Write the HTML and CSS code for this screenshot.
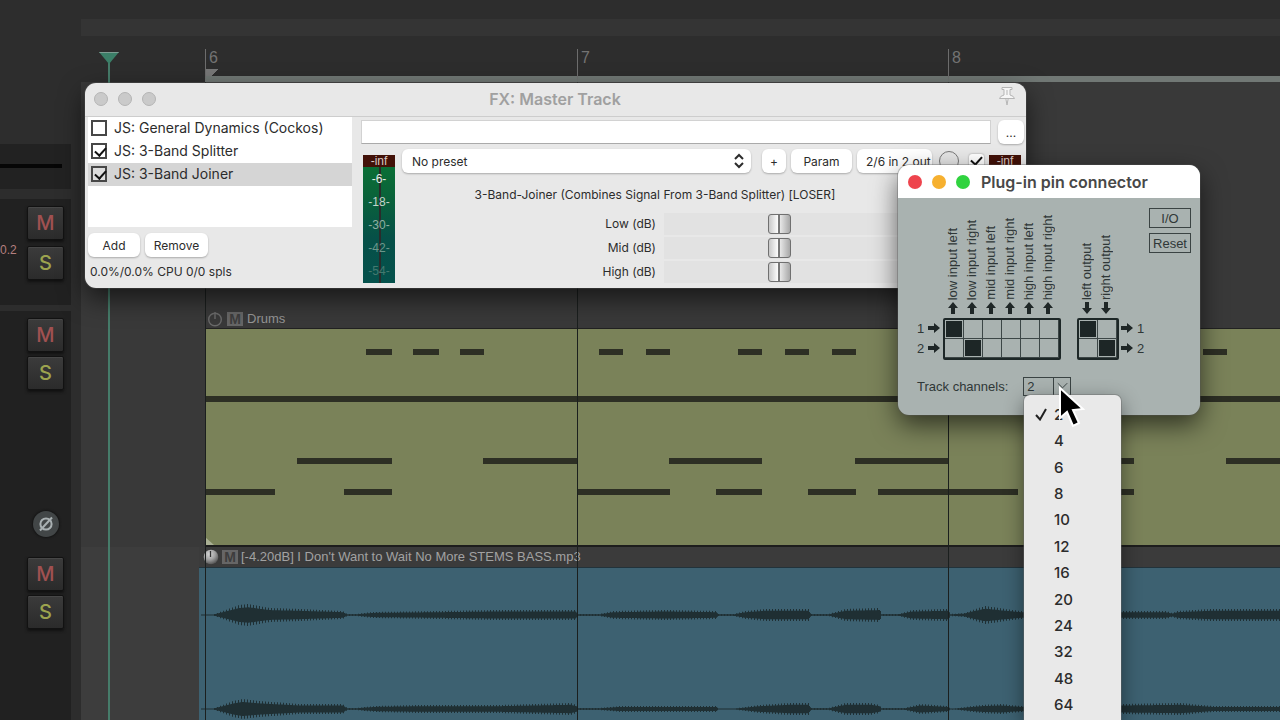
FILE: index.html
```html
<!DOCTYPE html>
<html lang="en">
<head>
<meta charset="utf-8">
<title>FX: Master Track</title>
<link rel="stylesheet" href="styles.css">
</head>
<body>
<div class="app">
  <aside class="tracks">
    <section class="master"><div class="master-line"></div></section>
    <section class="track track-first">
      <span class="volume">0.2</span>
      <div class="track-buttons spaced">
        <button class="tb mute">M</button>
        <button class="tb solo">S</button>
      </div>
    </section>
    <section class="track track-drums">
      <div class="track-buttons">
        <button class="tb mute">M</button>
        <button class="tb solo">S</button>
      </div>
      <button class="phase" aria-label="Phase">
        <svg viewBox="0 0 26 26" width="26" height="26"><circle cx="13" cy="13" r="5.6"/><path d="M7 19.5 19 6.5"/></svg>
      </button>
    </section>
    <section class="track track-bass">
      <div class="track-buttons">
        <button class="tb mute">M</button>
        <button class="tb solo">S</button>
      </div>
    </section>
  </aside>

  <main class="arrange">
    <div class="toolbar-gap"></div>
    <div class="regions"></div>
    <div class="ruler">
      <div class="measure first"><span>6</span></div>
      <div class="measure second"><span>7</span></div>
      <div class="measure rest"><span>8</span></div>
    </div>
    <div class="lane lane-drums">
      <header class="item-head">
        <svg class="power" viewBox="0 0 16 16" width="16" height="16"><circle cx="8" cy="8.500" r="6.300"/><path d="M8 1v7"/></svg>
        <span class="m-badge">M</span>
        <span>Drums</span>
      </header>
      <svg class="midi" height="216">
        <g id="notes"></g>
        <path class="corner" d="M0 208 9 216H0z"/>
      </svg>
    </div>
    <div class="lane lane-bass">
      <header class="item-head">
        <svg class="knob" viewBox="0 0 16 16" width="16" height="16">
          <defs><radialGradient id="kg" cx=".4" cy=".3" r=".75"><stop offset="0" stop-color="#d8d8d8"/><stop offset=".5" stop-color="#a2a2a2"/><stop offset="1" stop-color="#4c4c4c"/></radialGradient></defs>
          <circle cx="8" cy="8" r="7.300" fill="url(#kg)"/><path d="M7.500 2v6" stroke="#333" stroke-width="1.300"/>
        </svg>
        <span class="m-badge">M</span>
        <span>[-4.20dB] I Don't Want to Wait No More STEMS BASS.mp3</span>
      </header>
      <svg class="audio"><path id="wave-left"/><path id="wave-right"/></svg>
    </div>
    <div class="gridlines"><i class="first"></i><i class="second"></i><i class="rest"></i></div>
    <div class="playhead"></div>
  </main>
</div>

<section class="window fx">
  <header class="titlebar">
    <span class="lights off"><i></i><i></i><i></i></span>
    <h1>FX: Master Track</h1>
    <svg class="pin" viewBox="0 0 18 20" width="18" height="20"><path d="M4 1.500h10v2h-2v5.500q4 1 4.500 3.500h-15q.5-2.500 4.500-3.500v-5.500h-2zM7.800 12.500h2.400L9 19zM9 4v5"/></svg>
  </header>
  <div class="fx-body">
    <div class="fx-left">
      <div class="fx-list">
        <label class="fx-row"><input type="checkbox" class="box"><span>JS: General Dynamics (Cockos)</span></label>
        <label class="fx-row"><input type="checkbox" class="box" checked><span>JS: 3-Band Splitter</span></label>
        <label class="fx-row selected"><input type="checkbox" class="box" checked><span>JS: 3-Band Joiner</span></label>
      </div>
      <div class="fx-actions">
        <button class="btn">Add</button>
        <button class="btn">Remove</button>
      </div>
      <p class="cpu">0.0%/0.0% CPU 0/0 spls</p>
    </div>
    <div class="fx-right">
      <div class="comment-row">
        <input type="text" class="comment" aria-label="Comment">
        <button class="btn more">...</button>
      </div>
      <div class="fx-main">
        <div class="meter"><b>-inf</b><span>-6-</span><span>-18-</span><span>-30-</span><span>-42-</span><span>-54-</span></div>
        <div class="plugin">
          <div class="preset-row">
            <div class="preset">
              <select aria-label="Preset"><option>No preset</option></select>
              <svg viewBox="0 0 12 16" width="12" height="16"><path d="M2 6l4-4 4 4M2 10l4 4 4-4"/></svg>
            </div>
            <button class="btn plus">+</button>
            <button class="btn param">Param</button>
            <button class="btn io">2/6 in 2 out</button>
            <button class="wet" aria-label="Wet mix"></button>
            <input type="checkbox" class="enable" aria-label="Enabled" checked>
          </div>
          <p class="desc">3-Band-Joiner (Combines Signal From 3-Band Splitter) [LOSER]</p>
          <div class="sliders">
            <label for="low">Low (dB)</label><input id="low" type="range" min="0" max="100" value="35">
            <label for="mid">Mid (dB)</label><input id="mid" type="range" min="0" max="100" value="35">
            <label for="high">High (dB)</label><input id="high" type="range" min="0" max="100" value="35">
          </div>
        </div>
        <div class="meter"><b>-inf</b></div>
      </div>
    </div>
  </div>
</section>

<section class="window pins">
  <header class="titlebar">
    <span class="lights"><i class="red"></i><i class="amber"></i><i class="green"></i></span>
    <h2>Plug-in pin connector</h2>
  </header>
  <div class="pins-body">
    <div class="routing">
      <svg class="defs"><defs>
        <symbol id="up" viewBox="0 0 12 12"><path d="M6 0 11 6H8v6H4V6H1z"/></symbol>
        <symbol id="down" viewBox="0 0 12 12"><path d="M6 12 11 6H8V0H4v6H1z"/></symbol>
        <symbol id="right" viewBox="0 0 12 12"><path d="M12 6 6 1v3H0v4h6v3z"/></symbol>
      </defs></svg>
      <div class="col-labels in">
        <div><span>low input left</span><svg><use href="#up"/></svg></div>
        <div><span>low input right</span><svg><use href="#up"/></svg></div>
        <div><span>mid input left</span><svg><use href="#up"/></svg></div>
        <div><span>mid input right</span><svg><use href="#up"/></svg></div>
        <div><span>high input left</span><svg><use href="#up"/></svg></div>
        <div><span>high input right</span><svg><use href="#up"/></svg></div>
      </div>
      <div class="col-labels out">
        <div><span>left output</span><svg><use href="#down"/></svg></div>
        <div><span>right output</span><svg><use href="#down"/></svg></div>
      </div>
      <div class="row-labels left">
        <div>1<svg><use href="#right"/></svg></div>
        <div>2<svg><use href="#right"/></svg></div>
      </div>
      <div class="matrix six">
        <input type="checkbox" aria-label="Channel 1 to low input left" checked><input type="checkbox" aria-label="Channel 1 to low input right"><input type="checkbox" aria-label="Channel 1 to mid input left"><input type="checkbox" aria-label="Channel 1 to mid input right"><input type="checkbox" aria-label="Channel 1 to high input left"><input type="checkbox" aria-label="Channel 1 to high input right">
        <input type="checkbox" aria-label="Channel 2 to low input left"><input type="checkbox" aria-label="Channel 2 to low input right" checked><input type="checkbox" aria-label="Channel 2 to mid input left"><input type="checkbox" aria-label="Channel 2 to mid input right"><input type="checkbox" aria-label="Channel 2 to high input left"><input type="checkbox" aria-label="Channel 2 to high input right">
      </div>
      <div class="matrix two">
        <input type="checkbox" aria-label="Left output to channel 1" checked><input type="checkbox" aria-label="Right output to channel 1">
        <input type="checkbox" aria-label="Left output to channel 2"><input type="checkbox" aria-label="Right output to channel 2" checked>
      </div>
      <div class="row-labels right">
        <div><svg><use href="#right"/></svg>1</div>
        <div><svg><use href="#right"/></svg>2</div>
      </div>
    </div>
    <div class="side-buttons">
      <button>I/O</button>
      <button>Reset</button>
    </div>
    <div class="channels">
      <label for="channels">Track channels:</label>
      <div class="chan-box">
        <select id="channels"><option>2</option></select>
        <svg viewBox="0 0 18 18" width="18" height="18"><path d="M4 6l5 5 5-5"/></svg>
      </div>
    </div>
  </div>
</section>

<ul class="menu" role="listbox" aria-label="Track channels">
  <li role="option" aria-selected="true"><svg viewBox="0 0 14 14" width="14" height="14"><path d="M2 8l4 4.500L12 2"/></svg>2</li>
  <li role="option">4</li>
  <li role="option">6</li>
  <li role="option">8</li>
  <li role="option">10</li>
  <li role="option">12</li>
  <li role="option">16</li>
  <li role="option">20</li>
  <li role="option">24</li>
  <li role="option">32</li>
  <li role="option">48</li>
  <li role="option">64</li>
</ul>

<svg class="cursor" viewBox="0 0 30 44" width="30" height="44"><path d="M3 3v30l7-6 6 14 6-3-6-13 10-1z"/></svg>
<script src="timeline.js"></script>
</body>
</html>
```
FILE: styles.css
```css
* { box-sizing: border-box; }
body {
  margin: 0;
  height: 100vh;
  overflow: hidden;
  position: relative;
  background: #2d2d2d;
  font-family: Inter, "Liberation Sans", sans-serif;
  font-size: 13px;
  color: #2c2c2c;
}
h1, h2, p, ul { margin: 0; padding: 0; }
button, input, select { font: inherit; color: inherit; margin: 0; }
.app { display: flex; height: 100%; }

/* track panel */
.tracks {
  flex: 0 0 81px;
  padding: 144px 10px 0 0;
  display: flex;
  flex-direction: column;
  background: #2d2d2d;
}
.master { height: 45px; margin-bottom: 10px; padding-top: 20px; background: #222; }
.master-line { height: 4px; width: 62px; background: #060606; }
.track { background: #212121; display: flex; position: relative; }
.track-first { height: 106px; margin-bottom: 6px; padding-top: 7px; }
.track-drums { height: 239px; padding-top: 7px; flex-direction: column; justify-content: space-between; padding-bottom: 13px; }
.track-bass { flex: 1; padding-top: 7px; }
.volume {
  width: 17px;
  margin-right: 10px;
  padding-top: 37px;
  font-family: "Liberation Sans", sans-serif;
  font-size: 12px;
  line-height: 15px;
  color: #b47f7f;
}
.track-buttons { display: flex; flex-direction: column; gap: 4px; margin-left: 27px; }
.volume + .track-buttons { margin-left: 0; }
.track-buttons.spaced { gap: 6px; }
.tb {
  width: 37px;
  height: 34px;
  padding: 0;
  border: 1px solid #121212;
  border-radius: 2px;
  background: linear-gradient(#3b3b3b, #2b2b2b);
  box-shadow: inset 0 1px #474747, 0 2px 3px #111;
  font-weight: 500;
  font-size: 20px;
  line-height: 32px;
}
.mute { color: #a05151; }
.solo { color: #9da44e; }
.phase { width: 26px; height: 26px; margin-left: 33px; padding: 0; border: 0; border-radius: 50%; background: #424647; box-shadow: 0 0 2px 1px #151515; }
.phase svg { display: block; fill: none; stroke: #a9b0b2; stroke-width: 2; }

/* arrange view */
.arrange {
  flex: 1;
  min-width: 0;
  display: flex;
  flex-direction: column;
  position: relative;
  background: #3b3b3b;
  font-family: "Liberation Sans", sans-serif;
}
.toolbar-gap { flex: 0 0 19px; background: #2d2d2d; }
.regions { flex: 0 0 17px; background: #343434; }
.ruler { flex: 0 0 46px; display: flex; padding-left: 124px; background: #2d2d2d; }
.measure { margin-top: 13px; border-left: 1px solid #6d6d6d; border-bottom: 6px solid #717875; }
.measure span { display: block; padding-left: 3px; font-size: 16px; line-height: 18px; color: #737373; }
.first { flex: 0 0 372px; }
.second { flex: 0 0 371px; }
.rest { flex: 1; }
.measure.first { background: linear-gradient(to bottom right, #777 50%, transparent 51%) 0 20px / 12px 12px no-repeat; }
.lane { display: flex; flex-direction: column; }
.lane-drums { flex: 0 0 465px; padding: 228px 0 0 124px; background: #393939; }
.item-head { display: flex; align-items: center; gap: 4px; height: 18px; padding-left: 2px; line-height: 18px; color: #959595; }
.power { fill: none; stroke: #6a6a6a; stroke-width: 1.4; }
.m-badge { width: 16px; height: 14px; background: #666; color: #3d3d3d; font-weight: bold; font-size: 14px; line-height: 15px; text-align: center; }
.midi { width: 100%; border-top: 1px solid #222; border-bottom: 2px solid #1d1d1d; box-sizing: content-box; background: #7a8259; fill: #2d2f24; }
.corner { fill: #aab093; }
.lane-bass { flex: 1; min-height: 0; padding-left: 118px; background: #3d3d3d; }
.lane-bass .item-head { height: 20px; padding-left: 4px; gap: 3px; background: #3b3b3b; color: #a2a2a2; }
.audio { flex: 1; min-height: 0; width: 100%; border-top: 1px solid #22333b; background: #3d6171; fill: #1f2f33; }
.gridlines { position: absolute; inset: 82px 0 0 124px; display: flex; pointer-events: none; }
.gridlines i { border-left: 1px solid #1b1f1e; }
.playhead { position: absolute; left: 27px; top: 52px; bottom: 0; width: 2px; background: #467c6a; }
.playhead::before {
  content: "";
  position: absolute;
  left: -9px;
  top: 0;
  width: 20px;
  height: 11px;
  background: #3b7f68;
  border-top: 1px solid #7d9c92;
  clip-path: polygon(0 0, 100% 0, 50% 100%);
}

/* windows */
.window { position: absolute; border-radius: 11px; overflow: hidden; box-shadow: 0 0 0 1px #5555, 0 10px 26px #0009; }
.titlebar { display: flex; align-items: center; }
.titlebar h1, .titlebar h2 { font-size: 16px; line-height: 20px; font-weight: 600; }
.lights { display: flex; gap: 10px; }
.lights i { width: 14px; height: 14px; border-radius: 50%; }
.lights.off i { background: #cacaca; border: 1px solid #b4b4b4; }
.red { background: #ee444d; }
.amber { background: #f6b02f; }
.green { background: #30d33f; }

.fx { left: 85px; top: 83px; width: 941px; background: #e8e8e8; }
.fx .titlebar { height: 34px; padding: 0 10px 1px 9px; border-bottom: 1px solid #cdcdcd; }
.fx h1 { flex: 1; text-align: center; color: #a0a0a0; padding-right: 44px; }
.pin { fill: #f6f6f6; stroke: #b5b5b5; margin-bottom: 6px; }
.fx-body { display: flex; gap: 9px; padding: 0 2px 5px 3px; }
.fx-left { flex: 0 0 264px; }
.fx-list { height: 110px; background: #fff; }
.fx-row { display: flex; align-items: center; gap: 7px; height: 23px; padding: 0 0 1px 3px; font-size: 14px; line-height: 20px; }
.fx-row.selected { background: #d5d5d5; }
.box { appearance: none; position: relative; width: 16px; height: 16px; border: 2px solid #474747; background: #fff; }
.selected .box { background: #ddd; }
.box:checked::after, .enable:checked::after {
  content: "";
  position: absolute;
  left: 4px;
  top: 0;
  width: 5px;
  height: 9px;
  border: solid #111;
  border-width: 0 2px 2px 0;
  transform: rotate(42deg);
}
.btn { height: 24px; padding: 0 7px; border: 0; border-radius: 6px; background: #fff; box-shadow: 0 1px 2px #0004; font-size: 12px; white-space: nowrap; overflow: hidden; }
.fx-actions { display: flex; gap: 5px; padding-top: 6px; }
.fx-actions .btn { width: 63px; }
.fx-actions .btn:first-child { width: 52px; }
.cpu { padding: 7px 0 0 2px; font-size: 12px; line-height: 16px; }
.fx-right { flex: 1; min-width: 0; }
.comment-row { display: flex; gap: 7px; padding-top: 3px; }
.comment { flex: 1; min-width: 0; height: 24px; border: 1px solid #d2d2d2; border-bottom-color: #aaa; background: #fff; }
.more { width: 26px; }
.fx-main { display: flex; gap: 5px; padding: 5px 3px 0 2px; }
.meter {
  width: 32px;
  height: 128px;
  margin-top: 6px;
  display: grid;
  grid-template-rows: 12px repeat(5, 1fr);
  align-items: center;
  text-align: center;
  font: 12px "Liberation Sans", sans-serif;
  line-height: 12px;
  background: linear-gradient(90deg, transparent 16px, #2b2b2b 16px, #2b2b2b 18px, transparent 18px), linear-gradient(#0a7334, #0a6439 30%, #065048 65%, #05514c);
}
.meter b { font-weight: normal; color: #d8c8c4; background: #421108; height: 12px; }
.meter span { color: #e3ece6; }
.meter span:nth-of-type(2) { color: #c2d4cb; }
.meter span:nth-of-type(3) { color: #8fb0a2; }
.meter span:nth-of-type(4) { color: #6c968b; }
.meter span:nth-of-type(5) { color: #44796f; }
.plugin { flex: 1; min-width: 0; padding-left: 2px; }
.preset-row { display: flex; align-items: center; gap: 5px; }
.preset { flex: 1; position: relative; margin-right: 6px; }
.preset select { appearance: none; display: block; width: 100%; height: 24px; padding: 0 10px; border: 0; border-radius: 6px; background: #fff; box-shadow: 0 1px 2px #0004; font-size: 12px; }
.preset svg { position: absolute; right: 6px; top: 4px; fill: none; stroke: #2c2c2c; stroke-width: 2; pointer-events: none; }
.plus { width: 24px; }
.param { width: 61px; }
.io { width: 75px; padding: 0 0 0 9px; text-align: left; }
.wet { width: 20px; height: 20px; margin: 0 5px 0 2px; padding: 0; border: 1px solid #777; border-radius: 50%; background: #e4e4e4; }
.enable { appearance: none; position: relative; width: 15px; height: 15px; border-radius: 3px; background: #fff; box-shadow: 0 0 2px #0006; }
.desc { padding-top: 13px; width: 506px; text-align: center; font-size: 12px; line-height: 18px; }
.sliders { display: grid; grid-template-columns: 254px 1fr; column-gap: 8px; row-gap: 2px; padding-top: 9px; }
.sliders label { text-align: right; font-size: 12px; line-height: 22px; }
.sliders input { appearance: none; width: 100%; height: 22px; background: #e2e2e2; }
.sliders input::-webkit-slider-thumb {
  appearance: none;
  width: 23px;
  height: 20px;
  border: 1px solid #707070;
  border-radius: 3px;
  background: linear-gradient(90deg, #c8c8c8, #fff 45%, #777 45%, #777 52%, #e8e8e8 52%, #a8a8a8);
}

/* pin connector */
.pins { left: 898px; top: 165px; width: 302px; background: #a9b2b0; font-family: "Liberation Sans", sans-serif; }
.pins .titlebar { height: 33px; gap: 11px; padding: 0 10px; background: #fff; font-family: Inter, sans-serif; }
.pins h2 { color: #484848; }
.pins-body { display: grid; grid-template-columns: 1fr 42px; padding: 10px 9px 19px 19px; height: 217px; color: #2f3737; }
.routing { display: grid; grid-template-columns: 26px 118px 42px 1fr; grid-template-rows: 110px 42px; align-content: start; }
.routing svg { width: 12px; height: 12px; fill: #1f2727; flex: none; }
.routing .defs { position: absolute; width: 0; height: 0; }
.col-labels { display: flex; align-items: flex-end; }
.col-labels div { width: 19px; display: flex; flex-direction: column; align-items: center; gap: 2px; padding-bottom: 4px; }
.col-labels span { writing-mode: vertical-rl; transform: rotate(180deg); line-height: 16px; }
.col-labels.in { grid-area: 1 / 2; }
.col-labels.out { grid-area: 1 / 3; }
.row-labels.left { grid-area: 2 / 1; }
.matrix.six { grid-area: 2 / 2; }
.matrix.two { grid-area: 2 / 3; }
.row-labels.right { grid-area: 2 / 4; margin-left: 18px; }
.col-labels.out, .matrix.two { margin-left: 16px; width: 42px; }
.row-labels div { display: flex; align-items: center; gap: 4px; height: 20px; }
.matrix { display: grid; grid-auto-rows: 19px; border: 2px solid #1d2727; border-radius: 2px; }
.six { grid-template-columns: repeat(6, 19px); }
.two { grid-template-columns: repeat(2, 19px); }
.matrix input { appearance: none; width: 100%; height: 100%; box-shadow: inset -1px -1px #3c4646; }
.matrix input:checked { background: #1d2626; background-clip: content-box; padding: 1px 2px 2px 1px; }
.side-buttons { display: flex; flex-direction: column; gap: 5px; }
.side-buttons button { height: 20px; padding: 0; border: 1px solid #3a4343; background: none; }
.channels { grid-column: 1 / 3; display: flex; align-items: center; gap: 15px; align-self: end; }
.chan-box { position: relative; width: 48px; }
.chan-box select { appearance: none; display: block; width: 100%; height: 19px; padding: 0 3px; border: 1px solid #3a4343; border-radius: 0; background: none; }
.chan-box svg { position: absolute; right: 0; top: 0; border-left: 1px solid #3a4343; fill: none; stroke: #3a4343; }

/* open channel menu */
.menu {
  position: absolute;
  left: 1024px;
  top: 395px;
  bottom: 0;
  width: 97px;
  padding: 6px 0 2px;
  display: grid;
  grid-template-rows: repeat(12, 1fr);
  list-style: none;
  border-radius: 6px 6px 0 0;
  background: #e9e9e9;
  box-shadow: 0 0 0 1px #6666, 0 6px 20px #0007;
  font-size: 15px;
  font-weight: 500;
}
.menu li { display: flex; align-items: center; padding-left: 30px; }
.menu li[aria-selected] { padding-left: 10px; gap: 6px; }
.menu svg { fill: none; stroke: #222; stroke-width: 2; }
.cursor { position: absolute; left: 1057px; top: 385px; fill: #000; stroke: #fff; stroke-width: 2; }
```
FILE: timeline.js
```js
const NS = "http://www.w3.org/2000/svg";

// MIDI notes: [row top, [[start, end], ...]] measured from the item's start
const rows = [
  [20, [[161, 187], [208, 234], [255, 279], [394, 418], [441, 465], [533, 557], [580, 604], [627, 651], [998, 1022]]],
  [67, [[0, 4000]]],
  [129, [[92, 187], [278, 372], [464, 557], [650, 743], [836, 929], [1021, 1115]]],
  [160, [[0, 70], [139, 187], [372, 465], [511, 557], [603, 651], [673, 813], [883, 929]]]
];
const notes = document.getElementById("notes");
for (const [y, spans] of rows) {
  for (const [a, b] of spans) {
    const r = document.createElementNS(NS, "rect");
    r.setAttribute("x", a);
    r.setAttribute("y", y);
    r.setAttribute("width", b - a);
    r.setAttribute("height", 6);
    notes.append(r);
  }
}

// Peak envelopes: [x, half height]
const left = [[2,.5],[14,.6],[26,5],[40,10],[49,11],[70,7],[100,6],[143,4],[148,1],[156,1],[173,3],[240,4],[296,5],[376,5],[379,1],[400,1],[414,4],[466,5],[517,4],[519,1],[534,1],[546,4],[566,6],[609,6],[612,1],[629,1],[646,6],[680,7],[682,1],[699,1],[713,5],[748,6],[751,1],[765,2],[776,6],[786,9],[806,6],[821,4],[923,4],[966,4],[973,2],[978,4],[1011,6],[1081,6],[1600,5]];
const right = [[2,.5],[14,.6],[34,8],[43,10],[60,8],[100,5],[143,5],[148,1],[156,1],[176,3],[220,4],[300,4],[371,6],[377,4],[379,1],[400,1],[421,3],[517,3],[519,.5],[535,.5],[560,4],[590,6],[609,6],[612,1],[629,1],[646,6],[671,6],[680,4],[682,1],[705,1],[721,5],[748,3],[751,.5],[759,1],[781,4],[801,5],[821,3],[923,5],[981,6],[1013,3],[1081,3],[1600,4]];

function wave(env, mid) {
  let d = "", i = 0;
  const end = env[env.length - 1][0];
  for (let x = env[0][0]; x < end; x++) {
    while (env[i + 1][0] < x) i++;
    const [x0, h0] = env[i], [x1, h1] = env[i + 1];
    const h = h0 + (h1 - h0) * (x - x0) / (x1 - x0);
    const k = Math.max(.5, x % 3 ? h * .7 : h);
    d += `M${x} ${mid - k}h1v${2 * k}h-1z`;
  }
  return d;
}
document.getElementById("wave-left").setAttribute("d", wave(left, 47));
document.getElementById("wave-right").setAttribute("d", wave(right, 141));
```
